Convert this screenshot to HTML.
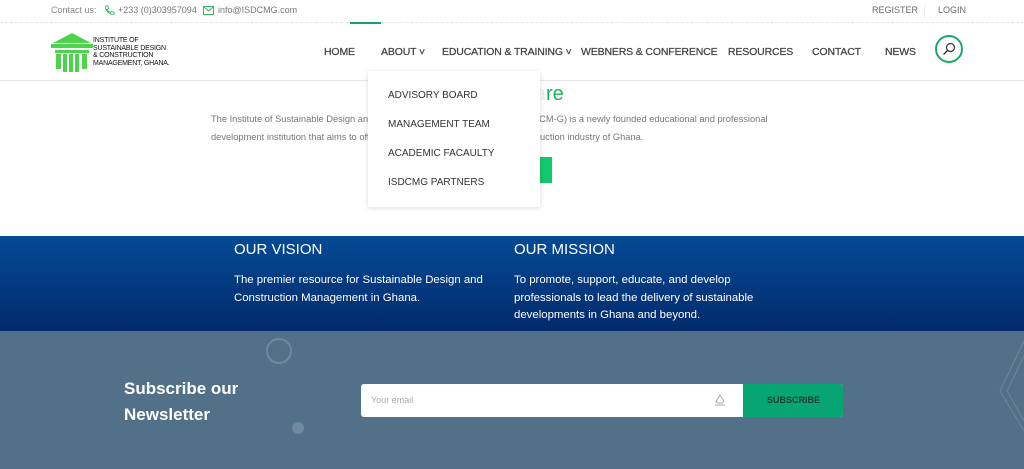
<!DOCTYPE html>
<html><head><style>
*{margin:0;padding:0;box-sizing:border-box}
body{width:1024px;height:469px;overflow:hidden;font-family:"Liberation Sans",Arial,sans-serif;background:#fff;position:relative}
.a{position:absolute;white-space:nowrap}
.nav{font-size:10.5px;color:#444;top:46px;letter-spacing:-0.15px;-webkit-text-stroke:0.25px #444}
.dd{font-size:10px;color:#333}
</style></head><body>
<div class="a" style="left:0;top:22px;width:1024px;border-top:1px dashed #e3e3e3"></div>
<div class="a" style="left:51px;top:5px;font-size:9px;color:#888">Contact us:</div>
<svg class="a" style="left:104px;top:5px" width="11" height="11" viewBox="0 0 12 12"><path d="M2 1l2 0 1 3-1.5 1c.7 1.5 1.8 2.6 3.3 3.3L8 7l3 1 0 2c-5 1-10-4-9-9z" fill="none" stroke="#3bb56a" stroke-width="1"/></svg>
<div class="a" style="left:118px;top:5px;font-size:9px;color:#777">+233 (0)303957094</div>
<svg class="a" style="left:203px;top:6px" width="11" height="9"><rect x="0.5" y="0.5" width="10" height="8" fill="none" stroke="#3bb56a"/><path d="M1 1l4.5 4L10 1" fill="none" stroke="#3bb56a"/></svg>
<div class="a" style="left:218px;top:5px;font-size:9px;color:#777">info@ISDCMG.com</div>
<div class="a" style="left:872px;top:5px;font-size:9px;color:#6a6a6a">REGISTER</div>
<div class="a" style="left:924px;top:5px;height:12px;border-left:1px solid #eee"></div>
<div class="a" style="left:938px;top:5px;font-size:9px;color:#6a6a6a">LOGIN</div>
<div class="a" style="left:350px;top:22px;width:31px;height:2px;background:#17a06a"></div>
<svg class="a" style="left:51px;top:33px" width="42" height="40" viewBox="0 0 42 40"><path d="M2 10L21 0 40 10z" fill="#4cd44c"/><rect x="0" y="11" width="42" height="4" fill="#4cd44c"/><rect x="4" y="17" width="34" height="3" fill="#4cd44c"/><rect x="5" y="21" width="5" height="15" fill="#4cd44c"/><rect x="12" y="21" width="4" height="18" fill="#4cd44c"/><rect x="18" y="21" width="4" height="18" fill="#4cd44c"/><rect x="24" y="21" width="4" height="18" fill="#4cd44c"/><rect x="31" y="21" width="5" height="15" fill="#4cd44c"/></svg>
<div class="a" style="left:93px;top:37px;font-size:7px;line-height:7.5px;color:#111;letter-spacing:-.2px">INSTITUTE OF<br>SUSTAINABLE DESIGN<br>&amp; CONSTRUCTION<br>MANAGEMENT, GHANA.</div>
<div class="a nav" style="left:324px">HOME</div>
<div class="a nav" style="left:381px">ABOUT ˅</div>
<div class="a nav" style="left:442px">EDUCATION &amp; TRAINING ˅</div>
<div class="a nav" style="left:581px">WEBNERS &amp; CONFERENCE</div>
<div class="a nav" style="left:728px">RESOURCES</div>
<div class="a nav" style="left:812px">CONTACT</div>
<div class="a nav" style="left:885px">NEWS</div>
<div class="a" style="left:935px;top:35px;width:28px;height:28px;border:2px solid #1aa86c;border-radius:50%"></div>
<svg class="a" style="left:942px;top:42px" width="14" height="14"><circle cx="8.5" cy="5.5" r="4" fill="none" stroke="#333" stroke-width="1.2"/><path d="M5.5 8.5L1.5 12.5" stroke="#333" stroke-width="1.3"/></svg>
<div class="a" style="left:0;top:80px;width:1024px;border-top:1px solid #e6e6e6"></div>
<div class="a" style="left:457px;top:83px;font-size:20px;color:#e4f6ec">Who we a<span style="color:#1ab35a">re</span></div>
<div class="a" style="left:211px;top:110px;font-size:9.3px;line-height:18px;color:#777">The Institute of Sustainable Design and Construction Management, Ghana (ISDCM-G) is a newly founded educational and professional<br>development institution that aims to offer training, policy and research the construction industry of Ghana.</div>
<div class="a" style="left:475px;top:157px;width:77px;height:26px;background:#e8f9ef"></div>
<div class="a" style="left:540px;top:157px;width:12px;height:26px;background:#10c96a"></div>
<div class="a" style="left:368px;top:71px;width:172px;height:136px;background:#fff;box-shadow:0 1px 5px rgba(0,0,0,.15)"></div>
<div class="a dd" style="left:388px;top:90px">ADVISORY BOARD</div>
<div class="a dd" style="left:388px;top:119px">MANAGEMENT TEAM</div>
<div class="a dd" style="left:388px;top:148px">ACADEMIC FACAULTY</div>
<div class="a dd" style="left:388px;top:177px">ISDCMG PARTNERS</div>
<div class="a" style="left:0;top:236px;width:1024px;height:95px;background:linear-gradient(#044a95,#032a6c)"></div>
<div class="a" style="left:234px;top:241px;font-size:15px;color:#fff">OUR VISION</div>
<div class="a" style="left:234px;top:272px;font-size:11.4px;line-height:17.5px;color:#fff">The premier resource for Sustainable Design and<br>Construction Management in Ghana.</div>
<div class="a" style="left:514px;top:241px;font-size:15px;color:#fff">OUR MISSION</div>
<div class="a" style="left:514px;top:272px;font-size:11.4px;line-height:17.5px;color:#fff">To promote, support, educate, and develop<br>professionals to lead the delivery of sustainable<br>developments in Ghana and beyond.</div>
<div class="a" style="left:0;top:331px;width:1024px;height:138px;background:#537089"></div>
<div class="a" style="left:266px;top:338px;width:26px;height:26px;border:2px solid #6f889e;border-radius:50%"></div>
<div class="a" style="left:292px;top:422px;width:12px;height:12px;background:#7189a0;border-radius:50%"></div>
<svg class="a" style="left:975px;top:331px" width="49" height="100"><path d="M49 10L25 60 49 100M49 25L32 60 49 90" fill="none" stroke="#6c859b" stroke-width="1"/></svg>
<div class="a" style="left:124px;top:376px;font-size:17px;line-height:26px;font-weight:bold;color:#fff">Subscribe our<br>Newsletter</div>
<div class="a" style="left:361px;top:384px;width:482px;height:33px;background:#fff;border-radius:3px"></div>
<div class="a" style="left:371px;top:395px;font-size:9px;color:#aaa">Your email</div>
<svg class="a" style="left:713px;top:393px" width="14" height="14"><path d="M2 12h10M3 9l4-7 4 6-2 2H5z" fill="none" stroke="#aaa"/></svg>
<div class="a" style="left:743px;top:384px;width:100px;height:33px;background:#07a572;border-radius:0 3px 3px 0"></div>
<div class="a" style="left:767px;top:395px;font-size:9px;font-weight:bold;color:#1d3d32">SUBSCRIBE</div>
</body></html>
